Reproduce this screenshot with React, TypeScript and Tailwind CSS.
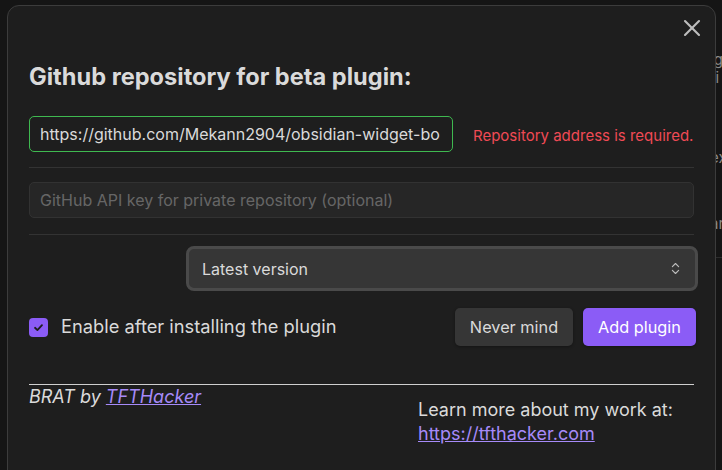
import { X, ChevronsUpDown } from "lucide-react";

const font = { fontFamily: "Inter, 'Noto Sans', sans-serif" };

function CheckBox() {
  return (
    <span className="flex h-[19px] w-[19px] shrink-0 items-center justify-center rounded-[4px] bg-[#8b5cf6]">
      <svg width="11" height="11" viewBox="0 0 12 12" fill="none">
        <path d="M2.2 6.3 4.8 8.8 9.8 3.4" stroke="#1e1e1e" strokeWidth="2" strokeLinecap="round" strokeLinejoin="round" />
      </svg>
    </span>
  );
}

export default function App() {
  return (
    <div className="relative h-[470px] w-[722px] overflow-hidden bg-[#151515] pl-[7px] pt-[5px] text-[#dadada]" style={font}>
      {/* bits of the settings page behind the modal */}
      <div className="absolute left-[710px] top-0 flex w-[40px] flex-col text-[15px] text-[#8a8a8a]">
        <span className="mt-[51px] leading-[18px]">ig</span>
        <span className="leading-[18px]">fi</span>
        <span className="mt-[62px] leading-[18px]">ex</span>
        <span className="mt-[48px] leading-[18px]">ar</span>
        <span className="mt-[24px] h-px w-full bg-[#2c2c2c]" />
      </div>

      <div className="relative z-10 h-[520px] w-[709px] rounded-[12px] border border-[#3c3c3c] bg-[#1e1e1e] px-[21px] pt-[57px]">
        <button className="absolute right-[9px] top-[8px] text-[#bdbdbd]">
          <X size={28} strokeWidth={1.8} />
        </button>

        <h2 className="text-[23.6px] font-bold leading-[28px] text-[#dadada]">Github repository for beta plugin:</h2>

        <div className="mt-[25px] flex items-center gap-[20px]">
          <div className="flex h-[36px] w-[424px] shrink-0 items-center overflow-hidden whitespace-nowrap rounded-[5px] border border-[#3fb950] bg-[#1e1e1e] px-[10px] text-[16px] text-[#dadada]">
            https://github.com/Mekann2904/obsidian-widget-bo
          </div>
          <span className="mt-[4px] text-[15px] text-[#f04a55]">Repository address is required.</span>
        </div>

        <div className="mt-[15px] h-px bg-[#333333]" />

        <div className="mt-[14px] flex h-[36px] items-center rounded-[5px] border border-[#323232] bg-[#262626] px-[10px] text-[16px] text-[#666666]">
          GitHub API key for private repository (optional)
        </div>

        <div className="mt-[16px] h-px bg-[#333333]" />

        <div className="mt-[11px] ml-[157px] mr-[-4px] flex h-[45px] items-center justify-between rounded-[8px] border-[3px] border-[#4a4a4a] bg-[#363636] pl-[13px] pr-[12px] text-[16px] text-[#dadada]">
          <span>Latest version</span>
          <ChevronsUpDown size={15} strokeWidth={1.8} className="text-[#bdbdbd]" />
        </div>

        <div className="mt-[17px] flex items-center justify-between">
          <label className="flex items-center gap-[13px] text-[18.3px]">
            <CheckBox />
            <span>Enable after installing the plugin</span>
          </label>
          <div className="mr-[-2px] flex gap-[10px]">
            <button className="flex h-[38px] w-[118px] items-center justify-center rounded-[5px] bg-[#363636] text-[16.3px] text-[#dadada] shadow-[0_1px_3px_rgba(0,0,0,0.35)]">
              Never mind
            </button>
            <button className="flex h-[38px] w-[113px] items-center justify-center rounded-[5px] bg-[#8b5cf6] text-[16.3px] text-white shadow-[0_1px_3px_rgba(0,0,0,0.35)]">
              Add plugin
            </button>
          </div>
        </div>

        <div className="mt-[38px] h-px bg-[#cfcfcf]" />

        <div className="flex justify-between text-[18px] leading-[24px]">
          <p className="italic">
            BRAT by{" "}
            <a className="text-[#a68af9] underline">TFTHacker</a>
          </p>
          <div className="mt-[13px] w-[276px]">
            <p>Learn more about my work at:</p>
            <a className="text-[#a68af9] underline">https://tfthacker.com</a>
          </div>
        </div>
      </div>
    </div>
  );
}
